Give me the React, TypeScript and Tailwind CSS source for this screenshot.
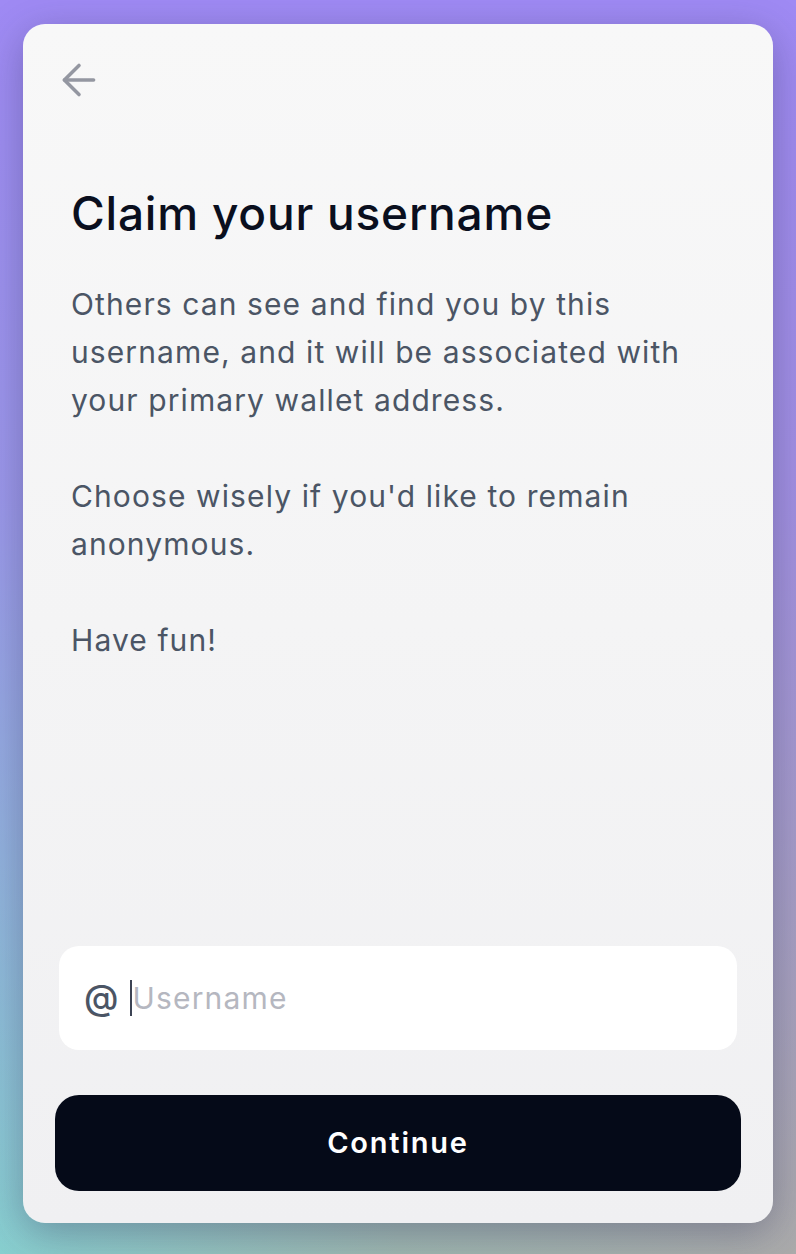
import React from "react";
import { ArrowLeft } from "lucide-react";

export default function App() {
  return (
    <div
      className="w-[796px] h-[1254px] pt-[24px] pb-[31px] px-[23px] bg-[linear-gradient(to_bottom,#9f8af4_0%,rgba(160,138,240,0.8)_40%,rgba(160,140,235,0)_100%),linear-gradient(to_right,#88d0d0,#9fb8b0_50%,#ababab)]"
      style={{ fontFamily: "Inter, 'Noto Sans', sans-serif" }}
    >
      <div className="h-full rounded-[22px] bg-[linear-gradient(to_bottom,#f8f8f8,#f0f0f2)] shadow-[0_10px_40px_rgba(40,40,80,0.35)] flex flex-col px-8 pb-8 pt-[31px]">
        <button className="w-[50px] h-[50px] -ml-[1px] flex items-center justify-center">
          <ArrowLeft size={50} strokeWidth={1.7} color="#9497a1" />
        </button>
        <div className="pl-[16px] pr-4 mt-[82px]">
          <h1 className="text-[46px] leading-[53px] font-medium text-[#0a0f1e] tracking-[0.8px]">
            Claim your username
          </h1>
          <div className="mt-[40px] text-[30px] leading-[48px] text-[#4b5565] tracking-[1.1px]">
            <p>
              Others can see and find you by this username, and it will be associated with your primary wallet
              address.
            </p>
            <p className="mt-[48px]">Choose wisely if you'd like to remain anonymous.</p>
            <p className="mt-[48px]">Have fun!</p>
          </div>
        </div>
        <div className="flex-1" />
        <div className="mx-1 h-[104px] rounded-[20px] bg-white flex items-center pl-[25px] pr-6">
          <span className="text-[35px] font-medium text-[#4b5565] leading-none -mt-[2px]">@</span>
          <div className="ml-[12px] w-[2px] h-[36px] bg-[#3d4454]" />
          <input
            className="flex-1 bg-transparent outline-none text-[30px] tracking-[1.2px] text-[#111827] placeholder:text-[#b5b7c0] caret-transparent"
            placeholder="Username"
            style={{ fontFamily: "Inter, 'Noto Sans', sans-serif" }}
          />
        </div>
        <button className="mt-[45px] h-[96px] rounded-[24px] bg-[#050a18] text-white text-[29px] font-semibold tracking-[1.8px]">
          Continue
        </button>
      </div>
    </div>
  );
}
